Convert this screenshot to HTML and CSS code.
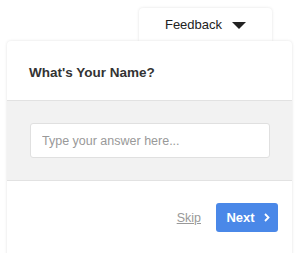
FILE: index.html
```html
<!DOCTYPE html>
<html lang="en">
	<head>
		<meta charset="UTF-8" />
		<title>Feedback</title>
		<link rel="stylesheet" href="styles.css">
	</head>
	<body>
		<div class="widget">
			<div class="tab">
				<span>Feedback</span>
				<svg class="caret" width="14" height="7" viewBox="0 0 14 7"><path d="M0 0h14L7 7z" fill="#222"/></svg>
			</div>
			<section class="card">
				<div class="question">
					<h1>What's Your Name?</h1>
				</div>
				<div class="answer">
					<input type="text" placeholder="Type your answer here..." />
				</div>
				<div class="actions">
					<a href="#" class="skip">Skip</a>
					<button type="button" class="next">Next
						<svg width="6" height="9" viewBox="0 0 6 9"><path d="M1 1l3.5 3.5L1 8" fill="none" stroke="#fff" stroke-width="1.8"/></svg>
					</button>
				</div>
			</section>
		</div>
	</body>
</html>
```

FILE: styles.css
```css
body {
	margin: 0;
	background-color: #fff;
	font-family: "Liberation Sans", Arial, sans-serif;
}

.widget {
	display: flex;
	flex-direction: column;
	align-items: flex-end;
	padding: 8px 8px 0 7px;
}

.tab {
	display: flex;
	align-items: center;
	justify-content: center;
	gap: 10px;
	width: 133px;
	height: 33px;
	margin-right: 20px;
	background-color: #fff;
	border-radius: 4px 4px 0 0;
	box-shadow: 0 0 3px rgba(0, 0, 0, 0.12);
	font-size: 13px;
	color: #222;
	position: relative;
	z-index: 1;
}

.caret {
	margin-top: 1px;
}

.card {
	width: 285px;
	height: 220px;
	background-color: #fff;
	border-radius: 4px 4px 0 0;
	box-shadow: 0 0 3px rgba(0, 0, 0, 0.12);
	position: relative;
	z-index: 2;
}

.question {
	height: 59px;
	display: flex;
	align-items: center;
	padding-left: 22px;
	border-bottom: 1px solid #e2e2e2;
}

h1 {
	margin: 0;
	font-size: 13.5px;
	font-weight: 700;
	color: #333;
	padding-top: 3px;
}

.answer {
	height: 79px;
	display: flex;
	align-items: center;
	padding: 0 22px 0 23px;
	background-color: #f2f2f2;
	border-bottom: 1px solid #e2e2e2;
}

.answer input {
	width: 100%;
	height: 35px;
	box-sizing: border-box;
	border: 1px solid #e0e0e0;
	border-radius: 3px;
	padding: 0 11px;
	font-family: inherit;
	font-size: 12.5px;
	color: #333;
}

.answer input::placeholder {
	color: #999;
}

.actions {
	display: flex;
	justify-content: flex-end;
	align-items: center;
	gap: 15px;
	padding: 22px 14px 0 0;
}

.skip {
	color: #999;
	font-size: 12.5px;
	text-decoration: underline;
	margin-top: 1px;
}

.next {
	display: flex;
	align-items: center;
	justify-content: center;
	gap: 9px;
	width: 62px;
	height: 29px;
	border: none;
	border-radius: 3px;
	background-color: #4a88e8;
	color: #fff;
	font-family: inherit;
	font-size: 13px;
	font-weight: 700;
	padding: 0 0 0 2px;
	cursor: pointer;
}
```
